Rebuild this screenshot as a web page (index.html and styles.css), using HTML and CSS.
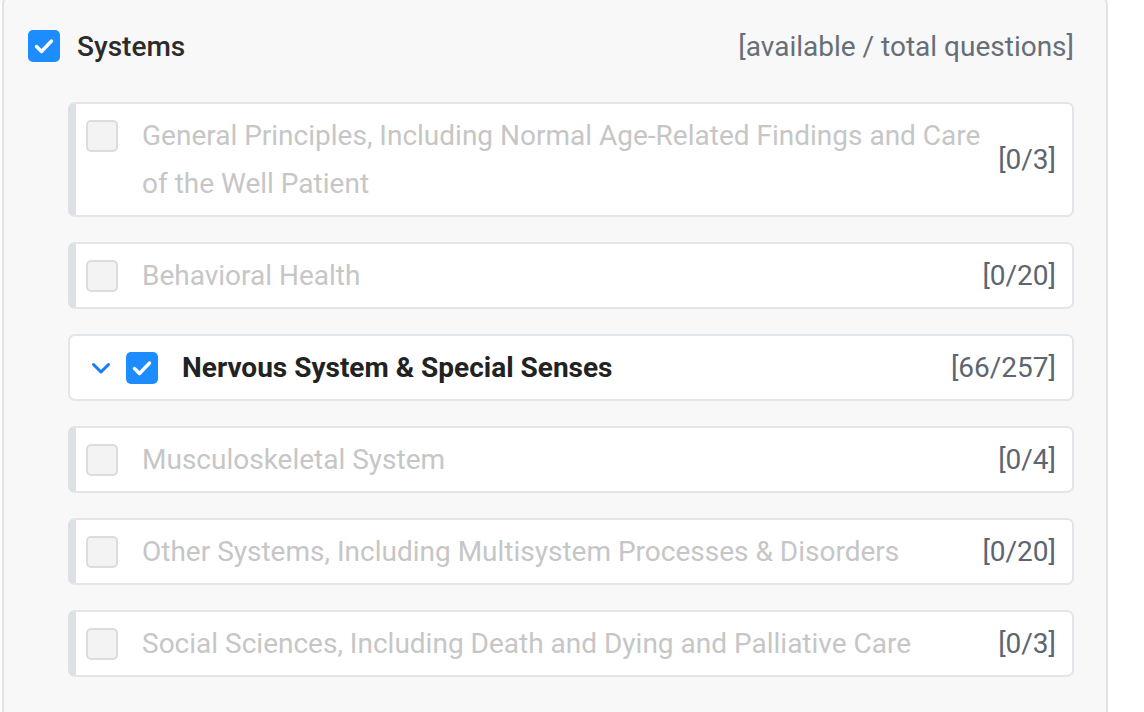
FILE: index.html
```html
<!DOCTYPE html>
<html>
<head>
<meta charset="utf-8">
<link rel="stylesheet" href="styles.css">
</head>
<body>
<div class="panel">
  <div class="header">
    <span class="cb cb-on"><svg viewBox="0 0 32 32" width="32" height="32"><polyline points="8.5,16.5 13.5,21.5 23.5,11" fill="none" stroke="#fff" stroke-width="3.4" stroke-linecap="round" stroke-linejoin="round"/></svg></span>
    <span class="title">Systems</span>
    <span class="legend">[available / total questions]</span>
  </div>
  <div class="list">
    <div class="row disabled">
      <span class="cb cb-off"></span>
      <span class="label">General Principles, Including Normal Age-Related Findings and Care of the Well Patient</span>
      <span class="count">[0/3]</span>
    </div>
    <div class="row disabled">
      <span class="cb cb-off"></span>
      <span class="label">Behavioral Health</span>
      <span class="count">[0/20]</span>
    </div>
    <div class="row active">
      <span class="chev"><svg viewBox="0 0 20 13" width="20" height="13"><polyline points="2.5,2.5 10,10 17.5,2.5" fill="none" stroke="#1a7cf5" stroke-width="3" stroke-linecap="round" stroke-linejoin="round"/></svg></span>
      <span class="cb cb-on"><svg viewBox="0 0 32 32" width="32" height="32"><polyline points="8.5,16.5 13.5,21.5 23.5,11" fill="none" stroke="#fff" stroke-width="3.4" stroke-linecap="round" stroke-linejoin="round"/></svg></span>
      <span class="label">Nervous System &amp; Special Senses</span>
      <span class="count">[66/257]</span>
    </div>
    <div class="row disabled">
      <span class="cb cb-off"></span>
      <span class="label">Musculoskeletal System</span>
      <span class="count">[0/4]</span>
    </div>
    <div class="row disabled">
      <span class="cb cb-off"></span>
      <span class="label">Other Systems, Including Multisystem Processes &amp; Disorders</span>
      <span class="count">[0/20]</span>
    </div>
    <div class="row disabled">
      <span class="cb cb-off"></span>
      <span class="label">Social Sciences, Including Death and Dying and Palliative Care</span>
      <span class="count">[0/3]</span>
    </div>
  </div>
</div>
</body>
</html>
```

FILE: styles.css
```css
html, body {
  margin: 0;
  padding: 0;
  background: #ffffff;
  font-family: Roboto, "Liberation Sans", sans-serif;
}
.panel {
  box-sizing: border-box;
  width: 1106px;
  height: 730px;
  margin: -4px 0 0 2px;
  padding: 32px 32px 0 24px;
  background: #f8f8f8;
  border: 2px solid #e0e4e8;
  border-radius: 8px;
}
.header {
  display: flex;
  align-items: center;
  height: 32px;
}
.title {
  margin-left: 17px;
  font-size: 28px;
  font-weight: 500;
  color: #2b2b2b;
  flex: 1;
}
.legend {
  font-size: 28px;
  color: #676e77;
}
.cb {
  box-sizing: border-box;
  width: 32px;
  height: 32px;
  flex: none;
  border-radius: 5px;
  display: block;
}
.cb svg { display: block; }
.cb-on { background: #1c8cff; }
.cb-off {
  background: #f3f3f3;
  border: 2px solid #dcdcdc;
  align-self: flex-start;
  margin-top: 8px;
}
.list {
  margin: 40px 0 0 40px;
  display: flex;
  flex-direction: column;
  gap: 25px;
}
.row {
  box-sizing: border-box;
  display: flex;
  align-items: center;
  min-height: 67px;
  padding: 8px 16px 7px 10px;
  background: #ffffff;
  border: 2px solid #e2e5e9;
  border-radius: 7px;
  font-size: 28px;
  line-height: 48px;
}
.row.disabled {
  border-left: 8px solid #dde1e6;
}
.row.active {
  padding-left: 21px;
}
.label {
  flex: 1;
  margin-left: 24px;
  color: #c6c6c6;
}
.row.active .label {
  color: #222222;
  font-weight: 700;
}
.count {
  margin-left: 10px;
  color: #5c6570;
  white-space: nowrap;
}
.chev {
  display: block;
  width: 20px;
  height: 13px;
  margin-right: 15px;
}
.chev svg { display: block; }
```
